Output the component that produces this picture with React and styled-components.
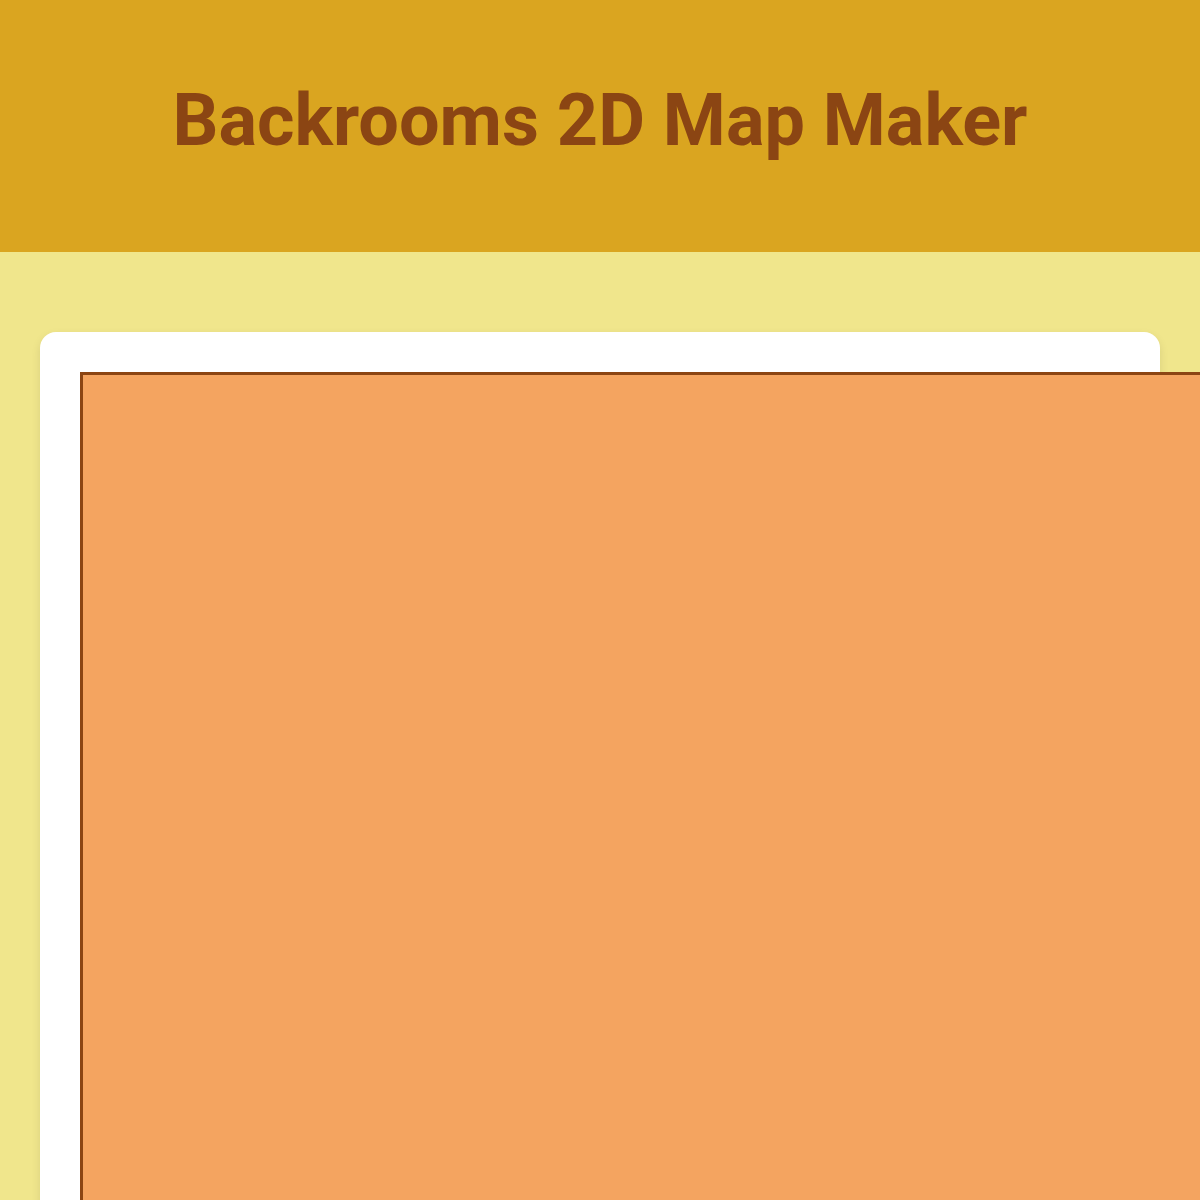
import React from 'react';
import styled, { createGlobalStyle } from 'styled-components';

const GlobalStyle = createGlobalStyle`
  html, body {
    margin: 0;
    padding: 0;
    overflow-x: hidden;
  }
  body {
    background-color: #f0e68c;
    font-family: Roboto, 'Liberation Sans', sans-serif;
  }
`;

const Header = styled.header`
  height: 252px;
  box-sizing: border-box;
  padding-top: 78px;
  background-color: #daa520;
  text-align: center;
`;

const Title = styled.h1`
  margin: 0;
  font-size: 72px;
  font-weight: 700;
  color: #8b4513;
`;

const Main = styled.main`
  padding: 80px 40px 40px;
`;

const Card = styled.div`
  padding: 40px;
  background-color: white;
  border-radius: 16px;
  box-shadow: 0 4px 10px rgba(0, 0, 0, 0.1);
`;

const Canvas = styled.div`
  width: ${(props) => props.width}px;
  height: ${(props) => props.height}px;
  background-color: #f4a460;
  border: 3px solid #8b4513;
`;

const App = () => {
  return (
    <>
      <GlobalStyle />
      <Header>
        <Title>Backrooms 2D Map Maker</Title>
      </Header>
      <Main>
        <Card>
          <Canvas width={1200} height={900} />
        </Card>
      </Main>
    </>
  );
};

export default App;
